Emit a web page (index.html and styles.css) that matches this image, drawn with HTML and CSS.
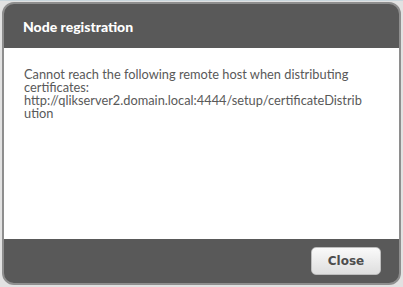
FILE: index.html
```html
<!DOCTYPE html>
<html>
<head>
  <title>Node registration</title>
  <link rel="stylesheet" href="styles.css">
</head>
<body>
  <div class="dialog">
    <div class="dialog-header">
      <h2>Node registration</h2>
    </div>
    <div class="dialog-body">
      <p class="message">Cannot reach the following remote host when distributing certificates: http://qlikserver2.domain.local:4444/setup/certificateDistribution</p>
    </div>
    <div class="dialog-footer">
      <button class="btn-close">Close</button>
    </div>
  </div>
</body>
</html>
```

FILE: styles.css
```css
body {
  margin: 0;
  padding: 0;
  background-color: #e2e2e2;
  border-top: 1px solid #c9d6dc;
  font-family: "Lato", sans-serif;
  height: 287px;
  box-sizing: border-box;
  overflow: hidden;
}

.dialog {
  margin: 1px 2px 0 2px;
  width: 399px;
  height: 283px;
  box-sizing: border-box;
  border: 2px solid #8e8e8e;
  border-radius: 12px;
  background-color: #595959;
  display: flex;
  flex-direction: column;
  overflow: hidden;
}

.dialog-header {
  height: 44px;
  display: flex;
  align-items: center;
  padding-left: 19px;
  flex-shrink: 0;
}

h2 {
  margin: 0;
  font-size: 14px;
  font-weight: 900;
  color: #fff;
}

.dialog-body {
  flex: 1;
  background-color: #fff;
  padding: 20px 20px;
}

.message {
  margin: 0;
  width: 338px;
  font-size: 12.8px;
  line-height: 13px;
  color: #595959;
  overflow-wrap: break-word;
}

.dialog-footer {
  height: 44px;
  flex-shrink: 0;
  display: flex;
  justify-content: flex-end;
  align-items: center;
  padding-right: 18px;
}

.btn-close {
  width: 70px;
  height: 28px;
  border: 1px solid #bdbdbd;
  border-radius: 5px;
  background: linear-gradient(#fafafa, #dedede);
  font-family: "DejaVu Sans", sans-serif;
  font-size: 12px;
  font-weight: bold;
  color: #4d4d4d;
  cursor: pointer;
}
```
